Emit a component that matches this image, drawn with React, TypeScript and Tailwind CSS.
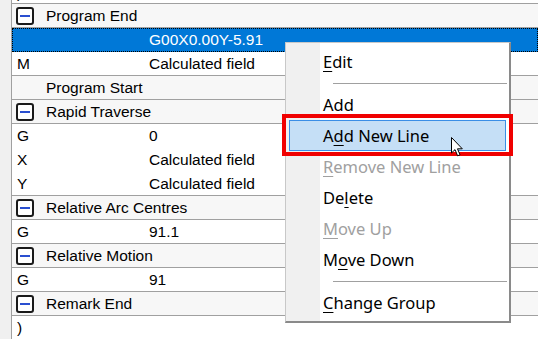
import React from "react";

type Row =
  | { kind: "head"; label: string; box?: boolean }
  | { kind: "data"; key: string; value: string; selected?: boolean };

// rows of the property grid, top to bottom
const ROWS: Row[] = [
  { kind: "head", label: "Program End", box: true },
  { kind: "data", key: "", value: "G00X0.00Y-5.91", selected: true },
  { kind: "data", key: "M", value: "Calculated field" },
  { kind: "head", label: "Program Start" },
  { kind: "head", label: "Rapid Traverse", box: true },
  { kind: "data", key: "G", value: "0" },
  { kind: "data", key: "X", value: "Calculated field" },
  { kind: "data", key: "Y", value: "Calculated field" },
  { kind: "head", label: "Relative Arc Centres", box: true },
  { kind: "data", key: "G", value: "91.1" },
  { kind: "head", label: "Relative Motion", box: true },
  { kind: "data", key: "G", value: "91" },
  { kind: "head", label: "Remark End", box: true },
  { kind: "data", key: ")", value: "" },
];

type Item =
  | { sep: true }
  | { sep?: false; pre: string; u: string; post: string; disabled?: boolean; hot?: boolean };

const MENU: Item[] = [
  { pre: "", u: "E", post: "dit" },
  { sep: true },
  { pre: "", u: "A", post: "dd" },
  { pre: "A", u: "d", post: "d New Line", hot: true },
  { pre: "", u: "R", post: "emove New Line", disabled: true },
  { pre: "De", u: "l", post: "ete" },
  { pre: "", u: "M", post: "ove Up", disabled: true },
  { pre: "M", u: "o", post: "ve Down" },
  { sep: true },
  { pre: "", u: "C", post: "hange Group" },
];

function MinusBox() {
  return (
    <span className="flex h-[18px] w-[18px] shrink-0 items-center justify-center rounded-[3px] border-2 border-[#1a1a1a] bg-white">
      <span className="h-[2px] w-[10px] bg-[#2a4fd0]" />
    </span>
  );
}

function GridRow({ row, lineBelow }: { row: Row; lineBelow: boolean }) {
  const line = lineBelow ? "border-b border-[#a0a0a0]" : "border-b border-transparent";
  if (row.kind === "head") {
    return (
      <div className={`flex h-[24px] items-center bg-[#f7f7f7] pl-[4px] ${line}`}>
        <span className="flex w-[30px] shrink-0 items-center">{row.box && <MinusBox />}</span>
        <span className="text-[#000]">{row.label}</span>
      </div>
    );
  }
  if (row.selected) {
    return (
      <div className="flex h-[24px] items-center border border-dotted border-black bg-[#0078d7] text-white">
        <span className="w-[136px] shrink-0 pl-[4px]">{row.key}</span>
        <span>{row.value}</span>
      </div>
    );
  }
  return (
    <div className={`flex h-[24px] items-center bg-white ${line}`}>
      <span className="w-[137px] shrink-0 pl-[5px]">{row.key}</span>
      <span>{row.value}</span>
    </div>
  );
}

function Cursor() {
  return (
    <svg
      width="13"
      height="21"
      viewBox="0 0 13 21"
      className="absolute left-[451px] top-[137px]"
      aria-hidden="true"
    >
      <path
        d="M0.5 0.5 L0.5 16 L4 12.6 L6.6 18.8 L9 17.8 L6.5 11.8 L11.3 11.8 Z"
        fill="#fff"
        stroke="#000"
        strokeWidth="1"
        strokeLinejoin="miter"
      />
    </svg>
  );
}

function ContextMenu() {
  return (
    <div
      className="absolute left-[285px] top-[42px] w-[226px] border border-r-2 border-b-2 border-[#c8c8c8] border-r-[#8a8a8a] border-b-[#8a8a8a] bg-white pb-[3px] pt-[3px]"
      style={{ fontFamily: '"Noto Sans", "Open Sans", sans-serif' }}
    >
      <div className="absolute bottom-0 left-0 top-0 w-[34px] bg-[#f0f0f0]" />
      {MENU.map((it, i) =>
        it.sep ? (
          <div key={i} className="relative flex h-[12px] items-center pl-[47px] pr-[2px]">
            <div className="h-px w-full bg-[#a0a0a0]" />
          </div>
        ) : (
          <div
            key={i}
            className={
              "relative mx-[3px] flex h-[31px] items-center border pl-[33px] pt-[2px] text-[16.5px] " +
              (it.hot ? "border-[#3a8ee6] bg-[#c5dff6]" : "border-transparent") +
              (it.disabled ? " text-[#a0a0a0]" : " text-black")
            }
          >
            <span>
              {it.pre}
              <span className="underline decoration-1 underline-offset-[3px]">{it.u}</span>
              {it.post}
            </span>
          </div>
        )
      )}
    </div>
  );
}

export default function App() {
  return (
    <div
      className="relative flex h-[339px] w-[538px] overflow-hidden bg-white text-[15.5px] text-black"
      style={{ fontFamily: '"Liberation Sans", Arial, sans-serif' }}
    >
      {/* left edge of the pane */}
      <div className="w-[12px] shrink-0 border-r border-[#a0a0a0] bg-[#f0f0f0]" />

      <div className="flex min-w-0 flex-1 flex-col">
        {/* clipped tail of the row above */}
        <div className="h-[4px] shrink-0 overflow-hidden border-b border-[#a0a0a0]">
          <div className="-mt-[19px] h-[24px] pl-[5px] leading-[24px]">)</div>
        </div>
        {ROWS.map((r, i) => {
          const next = ROWS[i + 1];
          const lineBelow = r.kind === "head" || (next !== undefined && next.kind === "head");
          return <GridRow key={i} row={r} lineBelow={lineBelow} />;
        })}
      </div>

      <ContextMenu />

      {/* highlight annotation */}
      <div className="absolute left-[282px] top-[114px] h-[42px] w-[231px] border-4 border-[#f00000]" />

      <Cursor />
    </div>
  );
}
